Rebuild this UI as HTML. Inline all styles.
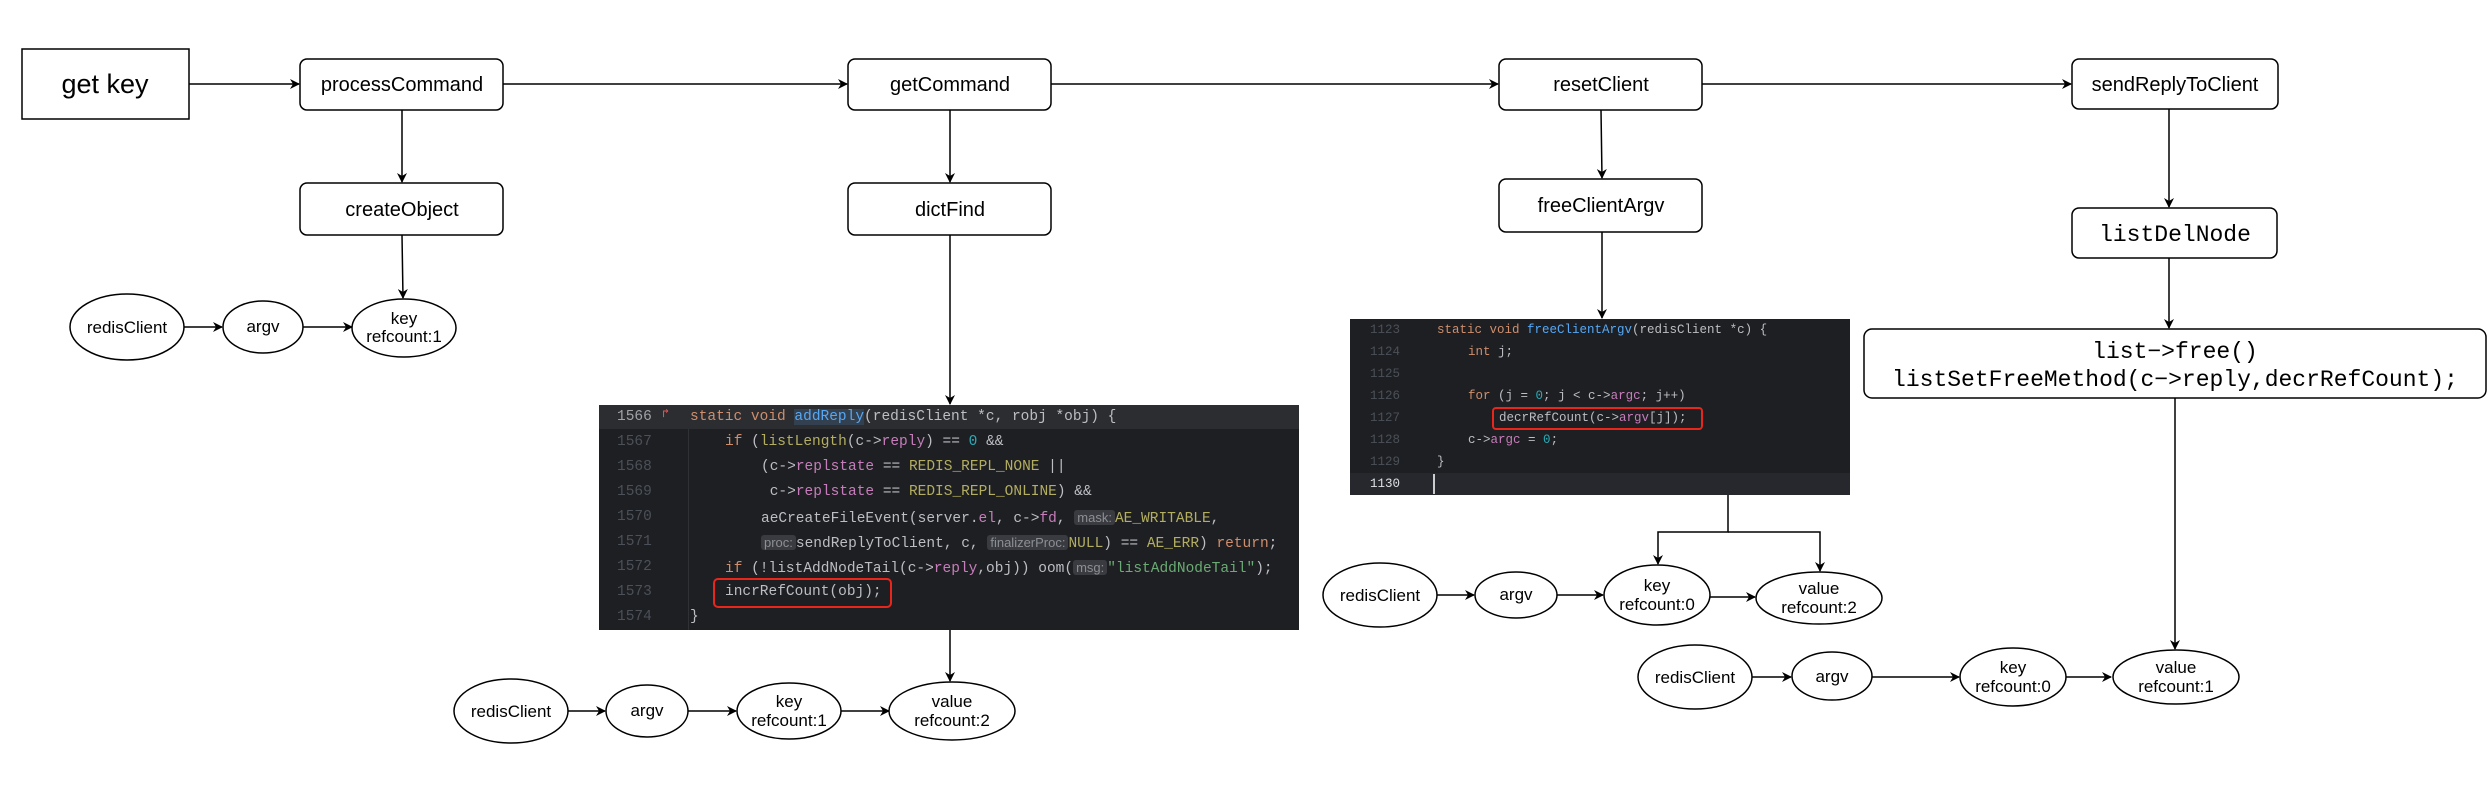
<!DOCTYPE html>
<html><head><meta charset="utf-8"><style>
html,body{margin:0;padding:0;background:#fff;width:2490px;height:810px;overflow:hidden;position:relative}
svg{position:absolute;left:0;top:0}
.code{position:absolute;background:#1e1f22;font-family:"Liberation Mono",monospace;color:#bcbec4;white-space:pre}
.ln{position:absolute;color:#4b5059;}
.kw{color:#cf8e6d}.fn{color:#56a8f5}.pu{color:#c77dbb}.cn{color:#b3ae60}.nu{color:#2aacb8}.st{color:#6aab73}.yl{color:#b3ae60}
.hint{background:#393b40;color:#8c8f94;font-family:"Liberation Sans",sans-serif;font-size:13px;padding:0 3px;border-radius:3px}
.row{position:absolute;left:0;right:0}
</style></head><body>
<svg width="2490" height="810" viewBox="0 0 2490 810" font-family="Liberation Sans, sans-serif">
<defs><marker id="a" markerWidth="10" markerHeight="10" refX="9" refY="5" orient="auto" markerUnits="userSpaceOnUse"><path d="M0,0 L10,5 L0,10 L3,5 Z" fill="#000"/></marker></defs>
<g fill="none" stroke="#000" stroke-width="1.5">
<rect x="22" y="49" width="167" height="70"/>
<rect x="300" y="59" width="203" height="51" rx="7"/>
<rect x="848" y="59" width="203" height="51" rx="7"/>
<rect x="1499" y="59" width="203" height="51" rx="7"/>
<rect x="2072" y="59" width="206" height="50" rx="7"/>
<rect x="300" y="183" width="203" height="52" rx="7"/>
<rect x="848" y="183" width="203" height="52" rx="7"/>
<rect x="1499" y="179" width="203" height="53" rx="7"/>
<rect x="2072" y="208" width="205" height="50" rx="7"/>
<rect x="1864" y="329" width="622" height="69" rx="8"/>
</g>
<g stroke="#000" stroke-width="1.5" marker-end="url(#a)">
<line x1="189" y1="84" x2="299" y2="84"/>
<line x1="503" y1="84" x2="847" y2="84"/>
<line x1="1051" y1="84" x2="1498" y2="84"/>
<line x1="1702" y1="84" x2="2071" y2="84"/>
<line x1="402" y1="110" x2="402" y2="182"/>
<line x1="402" y1="235" x2="403" y2="298"/>
<line x1="950" y1="110" x2="950" y2="182"/>
<line x1="950" y1="235" x2="950" y2="404"/>
<line x1="950" y1="630" x2="950" y2="681"/>
<line x1="1601" y1="110" x2="1602" y2="178"/>
<line x1="1602" y1="232" x2="1602" y2="318"/>
<line x1="2169" y1="109" x2="2169" y2="207"/>
<line x1="2169" y1="258" x2="2169" y2="328"/>
<line x1="2175" y1="398" x2="2175" y2="649"/>
<polyline points="1728,495 1728,532 1658,532 1658,564" fill="none"/>
<polyline points="1728,532 1820,532 1820,571" fill="none"/>
<line x1="184" y1="327" x2="222" y2="327"/><line x1="303" y1="327" x2="352" y2="327"/>
<line x1="568" y1="711" x2="605" y2="711"/><line x1="688" y1="711" x2="736" y2="711"/><line x1="841" y1="711" x2="889" y2="711"/>
<line x1="1437" y1="595" x2="1474" y2="595"/><line x1="1557" y1="595" x2="1603" y2="595"/><line x1="1710" y1="597" x2="1755" y2="597"/>
<line x1="1752" y1="677" x2="1791" y2="677"/><line x1="1872" y1="677" x2="1959" y2="677"/><line x1="2066" y1="677" x2="2111" y2="677"/>
</g>
<g fill="#fff" stroke="#000" stroke-width="1.5">
<ellipse cx="127" cy="327" rx="57" ry="33"/><ellipse cx="263" cy="327" rx="40" ry="26"/><ellipse cx="404" cy="328" rx="52" ry="29"/>
<ellipse cx="511" cy="711" rx="57" ry="32"/><ellipse cx="647" cy="711" rx="41" ry="26"/><ellipse cx="789" cy="711" rx="52" ry="28"/><ellipse cx="952" cy="711" rx="63" ry="29"/>
<ellipse cx="1380" cy="595" rx="57" ry="32"/><ellipse cx="1516" cy="595" rx="41" ry="23"/><ellipse cx="1657" cy="595" rx="53" ry="30"/><ellipse cx="1819" cy="598" rx="63" ry="26"/>
<ellipse cx="1695" cy="677" rx="57" ry="32"/><ellipse cx="1832" cy="676" rx="40" ry="24"/><ellipse cx="2013" cy="677" rx="53" ry="29"/><ellipse cx="2176" cy="677" rx="63" ry="27"/>
</g>
<g text-anchor="middle" fill="#000">
<text x="105" y="93" font-size="27">get key</text>
<g font-size="20">
<text x="402" y="91">processCommand</text><text x="950" y="91">getCommand</text><text x="1601" y="91">resetClient</text><text x="2175" y="91">sendReplyToClient</text>
<text x="402" y="216">createObject</text><text x="950" y="216">dictFind</text><text x="1601" y="212">freeClientArgv</text>
</g>
<g font-family="Liberation Mono, monospace" font-size="23">
<text x="2175" y="241">listDelNode</text>
<text x="2175" y="358">list−&gt;free()</text>
<text x="2175" y="386">listSetFreeMethod(c−&gt;reply,decrRefCount);</text>
</g>
<g font-size="17">
<text x="127" y="333">redisClient</text><text x="263" y="332">argv</text><text x="404" y="324">key</text><text x="404" y="342">refcount:1</text>
<text x="511" y="717">redisClient</text><text x="647" y="716">argv</text><text x="789" y="707">key</text><text x="789" y="726">refcount:1</text><text x="952" y="707">value</text><text x="952" y="726">refcount:2</text>
<text x="1380" y="601">redisClient</text><text x="1516" y="600">argv</text><text x="1657" y="591">key</text><text x="1657" y="610">refcount:0</text><text x="1819" y="594">value</text><text x="1819" y="613">refcount:2</text>
<text x="1695" y="683">redisClient</text><text x="1832" y="682">argv</text><text x="2013" y="673">key</text><text x="2013" y="692">refcount:0</text><text x="2176" y="673">value</text><text x="2176" y="692">refcount:1</text>
</g>
</g>
</svg>

<div class="code" style="left:599px;top:405px;width:700px;height:225px;font-size:14.5px;line-height:25px;">
<div style="position:absolute;left:0;right:0;top:0;height:24px;background:#2b2d30"></div>
<div style="position:absolute;left:89px;top:24px;bottom:0;border-left:1px solid #2f3134"></div>
<div class="row" style="top:0"><span class="ln" style="left:18px;color:#a0a3a8">1566</span><span style="position:absolute;left:63px;top:-3px;color:#e55;font-size:12px">↱</span><span style="position:absolute;left:91px"><span class="kw">static void </span><span class="fn" style="background:#33404f">addReply</span>(redisClient *c, robj *obj) {</span></div>
<div class="row" style="top:25px"><span class="ln" style="left:18px">1567</span><span style="position:absolute;left:126px"><span class="kw">if</span> (<span class="yl">listLength</span>(c-&gt;<span class="pu">reply</span>) == <span class="nu">0</span> &amp;&amp;</span></div>
<div class="row" style="top:50px"><span class="ln" style="left:18px">1568</span><span style="position:absolute;left:162px">(c-&gt;<span class="pu">replstate</span> == <span class="cn">REDIS_REPL_NONE</span> ||</span></div>
<div class="row" style="top:75px"><span class="ln" style="left:18px">1569</span><span style="position:absolute;left:162px"> c-&gt;<span class="pu">replstate</span> == <span class="cn">REDIS_REPL_ONLINE</span>) &amp;&amp;</span></div>
<div class="row" style="top:100px"><span class="ln" style="left:18px">1570</span><span style="position:absolute;left:162px">aeCreateFileEvent(server.<span class="pu">el</span>, c-&gt;<span class="pu">fd</span>, <span class="hint">mask:</span><span class="cn">AE_WRITABLE</span>,</span></div>
<div class="row" style="top:125px"><span class="ln" style="left:18px">1571</span><span style="position:absolute;left:162px"><span class="hint">proc:</span>sendReplyToClient, c, <span class="hint">finalizerProc:</span><span class="cn">NULL</span>) == <span class="cn">AE_ERR</span>) <span class="kw">return</span>;</span></div>
<div class="row" style="top:150px"><span class="ln" style="left:18px">1572</span><span style="position:absolute;left:126px"><span class="kw">if</span> (!listAddNodeTail(c-&gt;<span class="pu">reply</span>,obj)) oom(<span class="hint">msg:</span><span class="st">"listAddNodeTail"</span>);</span></div>
<div class="row" style="top:175px"><span class="ln" style="left:18px">1573</span><span style="position:absolute;left:126px">incrRefCount(obj);</span></div>
<div class="row" style="top:200px"><span class="ln" style="left:18px">1574</span><span style="position:absolute;left:91px">}</span></div>
<div style="position:absolute;left:114px;top:173px;width:175px;height:26px;border:2px solid #e8261b;border-radius:5px"></div>
</div>

<div class="code" style="left:1350px;top:319px;width:500px;height:176px;font-size:12.5px;line-height:22px;">
<div style="position:absolute;left:0;right:0;top:154px;height:22px;background:#26282e"></div>
<div style="position:absolute;left:83px;top:155px;height:20px;border-left:2px solid #ccc"></div>
<div class="row" style="top:0"><span class="ln" style="left:20px">1123</span><span style="position:absolute;left:87px"><span class="kw">static void </span><span class="fn">freeClientArgv</span>(redisClient *c) {</span></div>
<div class="row" style="top:22px"><span class="ln" style="left:20px">1124</span><span style="position:absolute;left:118px"><span class="kw">int</span> j;</span></div>
<div class="row" style="top:44px"><span class="ln" style="left:20px">1125</span></div>
<div class="row" style="top:66px"><span class="ln" style="left:20px">1126</span><span style="position:absolute;left:118px"><span class="kw">for</span> (j = <span class="nu">0</span>; j &lt; c-&gt;<span class="pu">argc</span>; j++)</span></div>
<div class="row" style="top:88px"><span class="ln" style="left:20px">1127</span><span style="position:absolute;left:149px">decrRefCount(c-&gt;<span class="pu">argv</span>[j]);</span></div>
<div class="row" style="top:110px"><span class="ln" style="left:20px">1128</span><span style="position:absolute;left:118px">c-&gt;<span class="pu">argc</span> = <span class="nu">0</span>;</span></div>
<div class="row" style="top:132px"><span class="ln" style="left:20px">1129</span><span style="position:absolute;left:87px">}</span></div>
<div class="row" style="top:154px"><span class="ln" style="left:20px;color:#dfe1e5">1130</span></div>
<div style="position:absolute;left:142px;top:88px;width:207px;height:19px;border:2px solid #e8261b;border-radius:4px"></div>
</div>
</body></html>
